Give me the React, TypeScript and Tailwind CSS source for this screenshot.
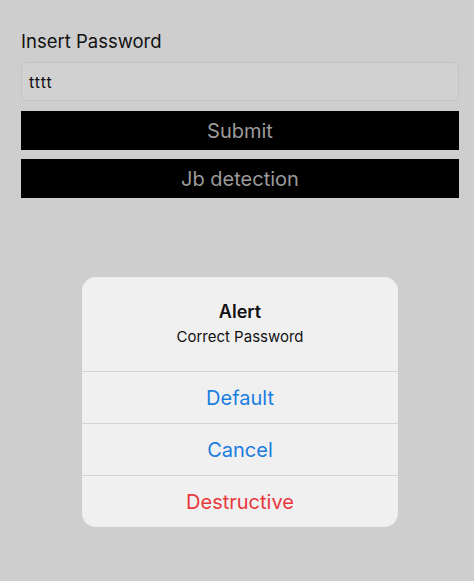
import React from "react";

export default function App() {
  const font = { fontFamily: "Inter, 'Open Sans', sans-serif" };
  return (
    <div
      className="relative w-[474px] h-[581px] bg-[#cfcecf] overflow-hidden pl-[21px] pr-[15px] pt-[30px] flex flex-col"
      style={font}
    >
      <div className="text-[18.5px] leading-[22px] text-[#111]">Insert Password</div>
      <div className="mt-[10px] h-[39px] rounded-[5px] border border-[#c2c1c3] bg-[#d2d1d2] flex items-center px-[7px] text-[16px] tracking-[1px] text-[#111]">
        tttt
      </div>
      <div className="mt-[10px] h-[39px] bg-black flex items-center justify-center text-[20px] text-[#9b9b9b]">
        Submit
      </div>
      <div className="mt-[9px] h-[39px] bg-black flex items-center justify-center text-[20px] text-[#9b9b9b]">
        Jb detection
      </div>

      <div className="absolute left-[82px] top-[277px] w-[316px] rounded-[14px] bg-[#f1f0f1] overflow-hidden flex flex-col">
        <div className="h-[94px] flex flex-col items-center pt-[24px]">
          <div className="text-[18px] leading-[22px] font-semibold text-[#111]">Alert</div>
          <div className="mt-[4px] text-[15px] leading-[20px] text-[#111]">Correct Password</div>
        </div>
        <div className="h-[1px] bg-[#d3d2d5]" />
        <div className="h-[51px] flex items-center justify-center text-[20px] text-[#1a7de0]">Default</div>
        <div className="h-[1px] bg-[#d3d2d5]" />
        <div className="h-[51px] flex items-center justify-center text-[20px] text-[#1a7de0]">Cancel</div>
        <div className="h-[1px] bg-[#d3d2d5]" />
        <div className="h-[51px] flex items-center justify-center text-[20px] text-[#e8383c]">Destructive</div>
      </div>
    </div>
  );
}
